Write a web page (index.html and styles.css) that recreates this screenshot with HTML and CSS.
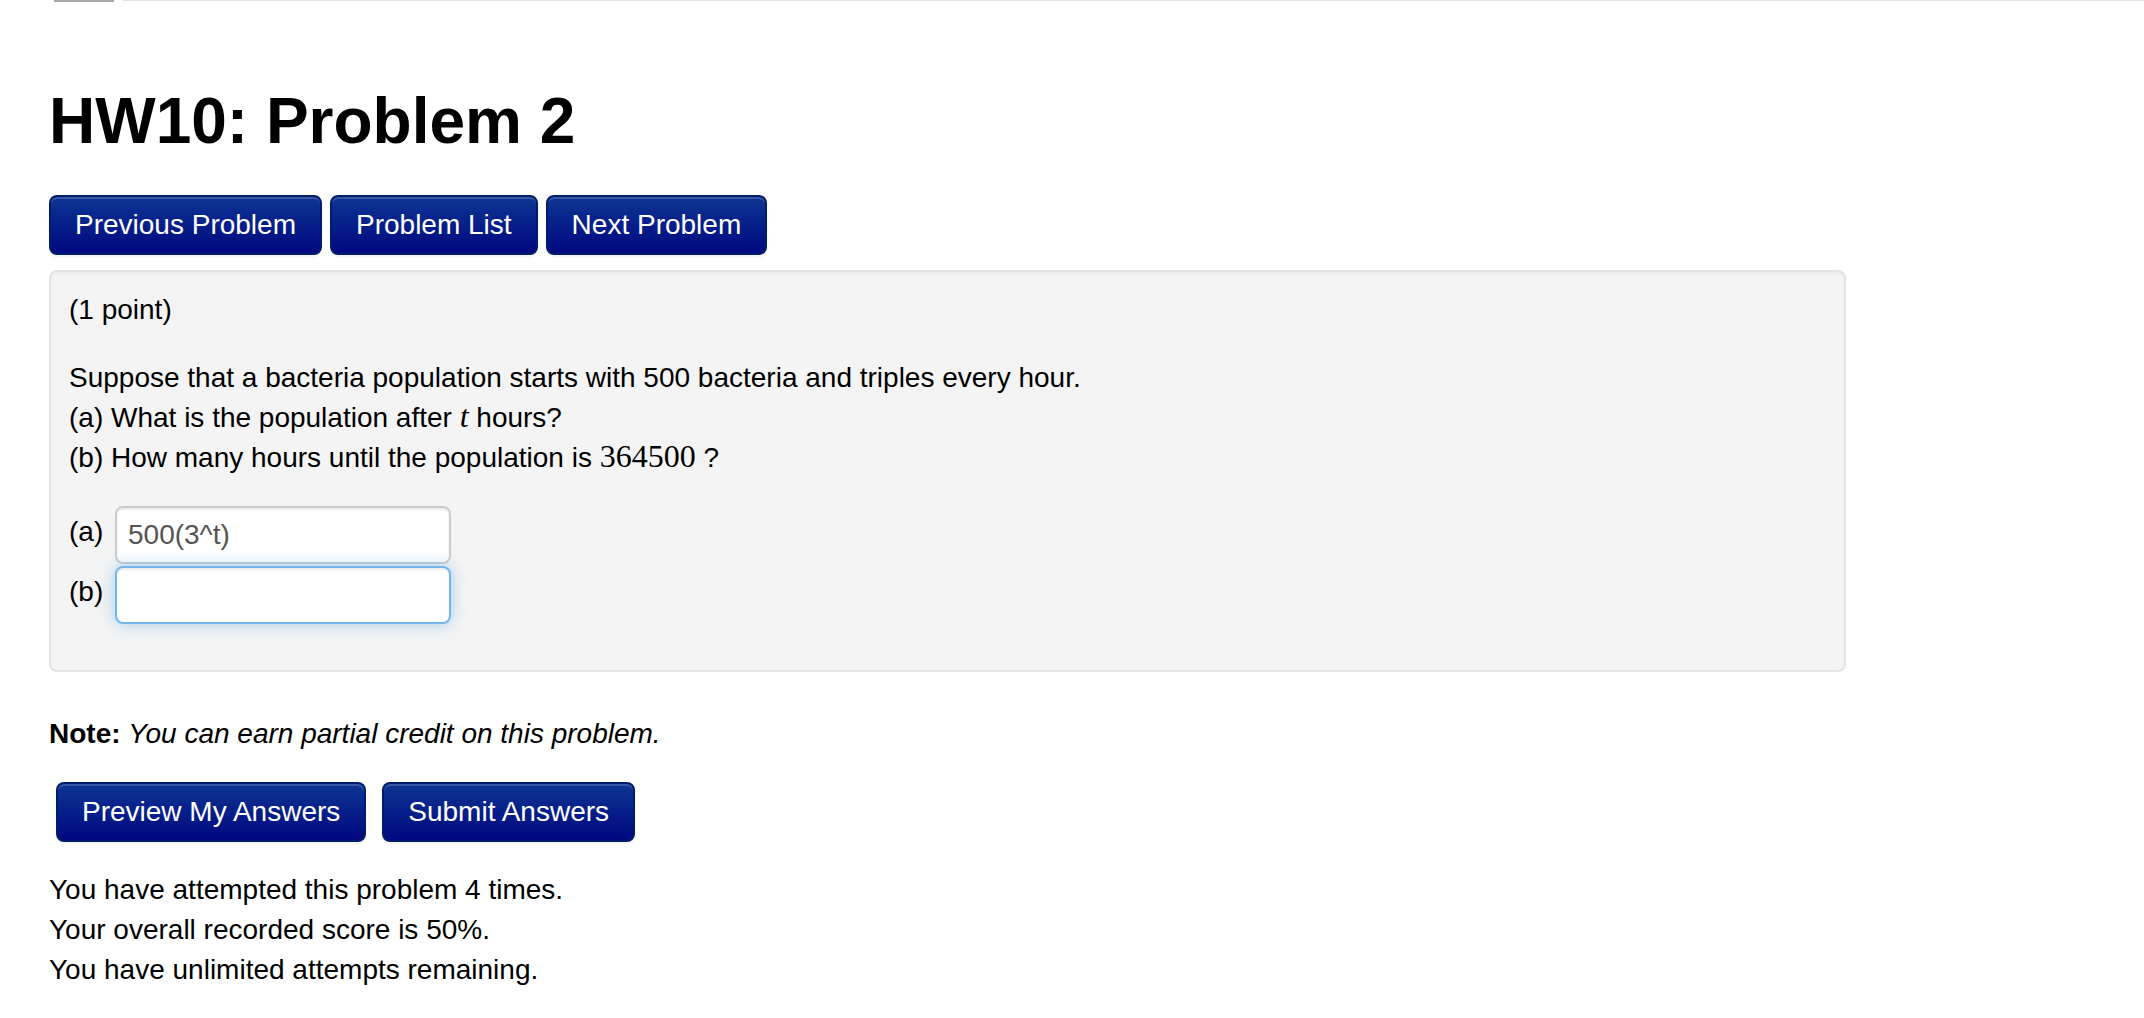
FILE: index.html
```html
<!DOCTYPE html>
<html lang="en">
<head>
    <meta charset="UTF-8">
    <meta name="viewport" content="width=device-width, initial-scale=1.0">
    <title>HW10: Problem 2</title>
    <link rel="stylesheet" href="styles.css">
</head>
<body>

<div class="topbar">
    <span class="tab"></span>
    <span class="rule"></span>
</div>

<div class="page">
    <h1>HW10: Problem 2</h1>

    <div class="nav">
        <a class="btn" href="#">Previous Problem</a>
        <a class="btn" href="#">Problem List</a>
        <a class="btn" href="#">Next Problem</a>
    </div>

    <form id="problemForm">
        <div class="problem">
            <p>(1 point)</p>
            <p>
                Suppose that a bacteria population starts with 500 bacteria and triples every hour.<br>
                (a) What is the population after <span class="math mi">t</span> hours?<br>
                (b) How many hours until the population is <span class="math">364500</span> ?
            </p>
            <div class="answers">
                <label class="answer">
                    <span class="answer-label">(a)</span>
                    <input type="text" name="AnSwEr0001" value="500(3^t)">
                </label>
                <label class="answer">
                    <span class="answer-label">(b)</span>
                    <input type="text" name="AnSwEr0002" class="focused">
                </label>
            </div>
        </div>

        <p class="note"><b>Note:</b> <i>You can earn partial credit on this problem.</i></p>

        <div class="actions">
            <button type="button" class="btn">Preview My Answers</button>
            <button type="button" class="btn">Submit Answers</button>
        </div>
    </form>

    <p class="status">
        You have attempted this problem 4 times.<br>
        Your overall recorded score is 50%.<br>
        You have unlimited attempts remaining.
    </p>
</div>

</body>
</html>
```

FILE: styles.css
```css
body {
    margin: 0;
    font-family: "Liberation Sans", Arial, sans-serif;
    font-size: 28px;
    line-height: 40px;
    color: #000;
    background: #fff;
}
.topbar {
    display: flex;
    height: 2px;
}
.topbar .tab {
    width: 60px;
    margin-left: 54px;
    background: #a9a9a9;
}
.topbar .rule {
    flex: 1;
    height: 1px;
    margin-left: 9px;
    background: #e2e2e2;
}
.page {
    width: 1797px;
    padding-left: 49px;
}
h1 {
    margin: 84px 0 39px;
    font-size: 64px;
    line-height: 70px;
    font-weight: bold;
}
.nav {
    display: flex;
    gap: 8px;
    margin-bottom: 15px;
}
.btn {
    display: inline-block;
    box-sizing: border-box;
    height: 60px;
    padding: 8px 24px;
    border: 2px solid #001c6b;
    border-radius: 8px;
    background: linear-gradient(#0d3593, #00087f);
    color: #fff;
    font: inherit;
    line-height: 40px;
    text-decoration: none;
    cursor: pointer;
    box-shadow: inset 0 2px 0 rgba(255, 255, 255, .18), 0 2px 3px rgba(0, 0, 0, .06);
}
.problem {
    background: #f4f4f4;
    border: 2px solid #e3e3e3;
    border-radius: 8px;
    padding: 18px;
    box-shadow: inset 0 2px 2px rgba(0, 0, 0, .04);
}
.problem p {
    margin: 0 0 28px;
}
.math {
    font-family: "Liberation Serif", "DejaVu Serif", serif;
    font-size: 32px;
    line-height: 1;
}
.mi {
    font-style: italic;
}
.answers {
    display: flex;
    flex-direction: column;
    gap: 2px;
    margin: 1px 0 28px;
}
.answer {
    display: flex;
    align-items: center;
    gap: 12px;
}
.answer-label {
    width: 34px;
    padding-bottom: 6px;
}
input {
    box-sizing: border-box;
    width: 336px;
    height: 58px;
    padding: 0 11px;
    border: 2px solid #ccc;
    border-radius: 8px;
    background: #fff;
    color: #555;
    font: inherit;
    box-shadow: inset 0 2px 2px rgba(0, 0, 0, .075);
    outline: none;
}
input.focused {
    border-color: #74b5ec;
    box-shadow: inset 0 2px 2px rgba(0, 0, 0, .075), 0 0 16px rgba(82, 168, 236, .5);
}
.note {
    margin: 42px 0 28px;
}
.actions {
    display: flex;
    gap: 16px;
    padding-left: 7px;
    margin-bottom: 28px;
}
.status {
    margin: 0;
}
```
